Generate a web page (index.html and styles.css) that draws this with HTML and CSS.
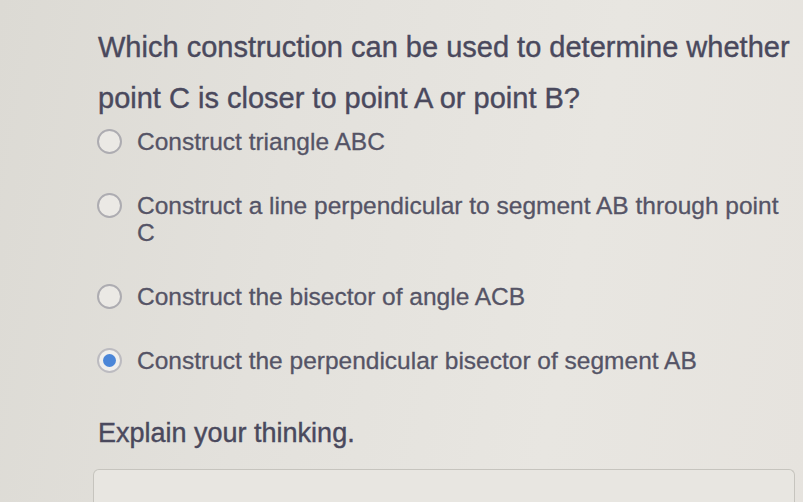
FILE: index.html
```html
<!DOCTYPE html>
<html lang="en">
<head>
<meta charset="utf-8">
<title>Question</title>
<link rel="stylesheet" href="styles.css">
</head>
<body>
<main class="page">
  <p class="question">Which construction can be used to determine whether point C is closer to point A or point B?</p>
  <ul class="options">
    <li class="option"><span class="radio"></span><span class="label">Construct triangle ABC</span></li>
    <li class="option"><span class="radio"></span><span class="label">Construct a line perpendicular to segment AB through point C</span></li>
    <li class="option"><span class="radio"></span><span class="label">Construct the bisector of angle ACB</span></li>
    <li class="option"><span class="radio radio-checked"></span><span class="label">Construct the perpendicular bisector of segment AB</span></li>
  </ul>
  <p class="prompt">Explain your thinking.</p>
  <div class="answer-box"></div>
</main>
</body>
</html>
```

FILE: styles.css
```css
html, body {
  margin: 0;
  height: 100%;
  overflow: hidden;
}
body {
  background: linear-gradient(100deg, #dcdad4 0%, #e3e1dc 35%, #e8e6e1 70%, #e6e3de 100%);
  font-family: "Liberation Sans", Arial, sans-serif;
  color: #4d4c5e;
}
.page {
  display: flex;
  flex-direction: column;
  padding: 22px 8px 0 98px;
}
.question {
  margin: 0;
  font-size: 29px;
  line-height: 51px;
  color: #4a495d;
  -webkit-text-stroke: 0.4px #4a495d;
}
.options {
  list-style: none;
  margin: 4px 0 0 -1px;
  padding: 0;
  display: flex;
  flex-direction: column;
  gap: 37px;
}
.option {
  display: flex;
  align-items: flex-start;
  gap: 15px;
}
.radio {
  flex: none;
  width: 21px;
  height: 21px;
  margin-top: 1px;
  border: 2px solid #adacb1;
  border-radius: 50%;
  background: #ebe9e5;
  display: flex;
  align-items: center;
  justify-content: center;
}
.radio-checked {
  border-color: #bcbbc0;
  background: #f0efed;
}
.radio-checked::after {
  content: "";
  width: 13px;
  height: 13px;
  border-radius: 50%;
  background: #4b86d8;
}
.label {
  font-size: 24.5px;
  line-height: 27px;
  color: #555466;
  -webkit-text-stroke: 0.3px #555466;
}
.prompt {
  margin: 43px 0 0;
  font-size: 27px;
  line-height: 32px;
  color: #4a495d;
  -webkit-text-stroke: 0.4px #4a495d;
}
.answer-box {
  margin: 20px 0 0 -5px;
  height: 80px;
  border: 1.5px solid #c6c4be;
  border-bottom: none;
  border-radius: 6px 6px 0 0;
  background: #e8e6e1;
}
```
